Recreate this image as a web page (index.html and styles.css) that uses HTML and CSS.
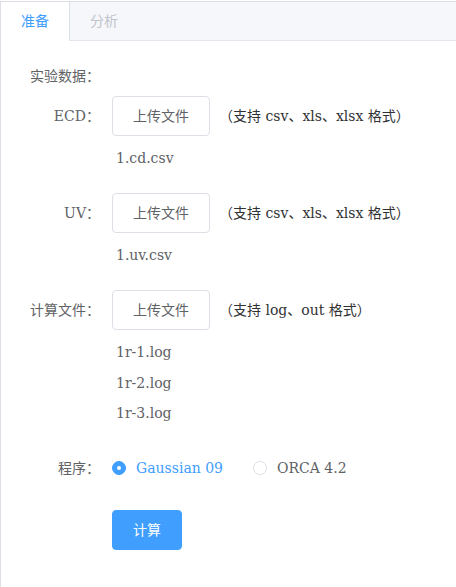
FILE: index.html
```html
<!DOCTYPE html>
<html lang="zh-CN">
<head>
  <meta charset="UTF-8" />
  <meta name="viewport" content="width=device-width, initial-scale=1.0" />
  <title>ECD 计算</title>
  <link rel="stylesheet" href="styles.css">
</head>
<body>

  <div class="card">
    <div class="tabs-header">
      <div class="tab active">准备</div>
      <div class="tab disabled">分析</div>
    </div>

    <div class="tabs-content">
      <form class="form" onsubmit="return false">
        <div class="form-item form-item-title">
          <label class="form-label">实验数据：</label>
        </div>

        <div class="form-item">
          <label class="form-label">ECD：</label>
          <div class="form-content">
            <div class="upload-row">
              <button type="button" class="btn">上传文件</button>
              <span class="tip">（支持 csv、xls、xlsx 格式）</span>
            </div>
            <ul class="file-list">
              <li>1.cd.csv</li>
            </ul>
          </div>
        </div>

        <div class="form-item">
          <label class="form-label">UV：</label>
          <div class="form-content">
            <div class="upload-row">
              <button type="button" class="btn">上传文件</button>
              <span class="tip">（支持 csv、xls、xlsx 格式）</span>
            </div>
            <ul class="file-list">
              <li>1.uv.csv</li>
            </ul>
          </div>
        </div>

        <div class="form-item">
          <label class="form-label">计算文件：</label>
          <div class="form-content">
            <div class="upload-row">
              <button type="button" class="btn">上传文件</button>
              <span class="tip">（支持 log、out 格式）</span>
            </div>
            <ul class="file-list">
              <li>1r-1.log</li>
              <li>1r-2.log</li>
              <li>1r-3.log</li>
            </ul>
          </div>
        </div>

        <div class="form-item">
          <label class="form-label">程序：</label>
          <div class="form-content radios">
            <label class="radio checked"><span class="radio-inner"></span><span class="radio-label">Gaussian 09</span></label>
            <label class="radio"><span class="radio-inner"></span><span class="radio-label">ORCA 4.2</span></label>
          </div>
        </div>

        <div class="form-item">
          <label class="form-label"></label>
          <div class="form-content">
            <button type="button" class="btn btn-primary">计算</button>
          </div>
        </div>
      </form>
    </div>
  </div>

</body>
</html>
```

FILE: styles.css
```css
* {
  box-sizing: border-box;
}
body {
  margin: 0;
  padding-top: 1px;
  font-family: "DejaVu Serif", "Noto Sans CJK SC", serif;
  font-size: 14px;
  color: #606266;
  background: #fff;
  overflow: hidden;
}
.card {
  min-height: 590px;
  background: #fff;
  border: 1px solid #dcdfe6;
  border-right: 0;
  border-bottom: 0;
}
.tabs-header {
  display: flex;
  height: 39px;
  background: #f5f7fa;
  border-bottom: 1px solid #e4e7ed;
}
.tab {
  height: 38px;
  line-height: 39px;
  padding: 0 20px;
  border-right: 1px solid transparent;
  color: #909399;
}
.tab.active {
  height: 39px;
  background: #fff;
  color: #409eff;
  border-right-color: #dcdfe6;
}
.tab.disabled {
  color: #c0c4cc;
}
.tabs-content {
  padding: 15px;
}
.form-item {
  display: flex;
  margin-bottom: 22px;
}
.form-item-title {
  margin-bottom: 0;
}
.form-label {
  flex: 0 0 96px;
  text-align: right;
  padding-right: 12px;
  line-height: 40px;
  color: #606266;
}
.form-content {
  flex: 1;
  line-height: 40px;
}
.upload-row {
  display: flex;
  align-items: center;
}
.btn {
  padding: 12px 20px;
  font-family: inherit;
  font-size: 14px;
  line-height: 14px;
  height: 40px;
  color: #606266;
  background: #fff;
  border: 1px solid #dcdfe6;
  border-radius: 4px;
  cursor: pointer;
}
.btn-primary {
  color: #fff;
  background: #409eff;
  border-color: #409eff;
}
.tip {
  margin-left: 9px;
  color: #303133;
}
.file-list {
  list-style: none;
  margin: 0;
  padding: 5px 0 0;
}
.file-list li {
  margin-top: 5px;
  padding-left: 4px;
  line-height: 1.8;
  color: #606266;
}
.radios {
  display: flex;
  align-items: center;
}
.radio {
  display: flex;
  align-items: center;
  margin-right: 30px;
  cursor: pointer;
}
.radio-inner {
  position: relative;
  width: 14px;
  height: 14px;
  border: 1px solid #dcdfe6;
  border-radius: 50%;
  background: #fff;
}
.radio.checked .radio-inner {
  border-color: #409eff;
  background: #409eff;
}
.radio.checked .radio-inner::after {
  content: "";
  position: absolute;
  left: 50%;
  top: 50%;
  width: 4px;
  height: 4px;
  margin: -2px 0 0 -2px;
  border-radius: 50%;
  background: #fff;
}
.radio-label {
  padding-left: 10px;
  line-height: 1;
}
.radio.checked .radio-label {
  color: #409eff;
}
```
